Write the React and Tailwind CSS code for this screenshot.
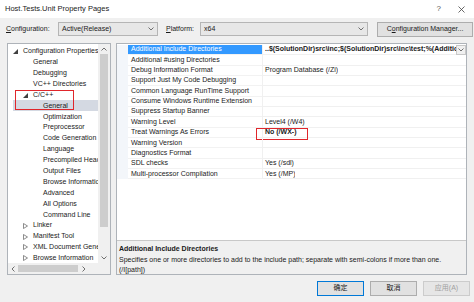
const treeItems = [
  { label: "Configuration Properties", level: 0, arrow: "open" },
  { label: "General", level: 1 },
  { label: "Debugging", level: 1 },
  { label: "VC++ Directories", level: 1 },
  { label: "C/C++", level: 1, arrow: "open" },
  { label: "General", level: 2, selected: true },
  { label: "Optimization", level: 2 },
  { label: "Preprocessor", level: 2 },
  { label: "Code Generation", level: 2 },
  { label: "Language", level: 2 },
  { label: "Precompiled Headers", level: 2 },
  { label: "Output Files", level: 2 },
  { label: "Browse Information", level: 2 },
  { label: "Advanced", level: 2 },
  { label: "All Options", level: 2 },
  { label: "Command Line", level: 2 },
  { label: "Linker", level: 1, arrow: "closed" },
  { label: "Manifest Tool", level: 1, arrow: "closed" },
  { label: "XML Document Generator", level: 1, arrow: "closed" },
  { label: "Browse Information", level: 1, arrow: "closed" },
];

const props = [
  { name: "Additional Include Directories", value: "..$(SolutionDir)src\\inc;$(SolutionDir)src\\inc\\test;%(AdditionalIncludeDirectories)", selected: true },
  { name: "Additional #using Directories", value: "" },
  { name: "Debug Information Format", value: "Program Database (/Zi)" },
  { name: "Support Just My Code Debugging", value: "" },
  { name: "Common Language RunTime Support", value: "" },
  { name: "Consume Windows Runtime Extension", value: "" },
  { name: "Suppress Startup Banner", value: "" },
  { name: "Warning Level", value: "Level4 (/W4)" },
  { name: "Treat Warnings As Errors", value: "No (/WX-)", bold: true, marked: true },
  { name: "Warning Version", value: "" },
  { name: "Diagnostics Format", value: "" },
  { name: "SDL checks", value: "Yes (/sdl)" },
  { name: "Multi-processor Compilation", value: "Yes (/MP)" },
];

const levelPad = ["pl-0", "pl-[10px]", "pl-[20px]"];

function Arrow({ kind }) {
  if (kind === "open") {
    return (
      <svg width="5" height="5" viewBox="0 0 5 5">
        <path d="M5 0 L5 5 L0 5 Z" fill="#404040" />
      </svg>
    );
  }
  return (
    <svg width="5" height="6" viewBox="0 0 5 6">
      <path d="M0.5 0.5 L4.5 3 L0.5 5.5 Z" fill="none" stroke="#707070" strokeWidth="0.8" />
    </svg>
  );
}

function Chevron({ color = "#606060" }) {
  return (
    <svg width="6" height="4" viewBox="0 0 6 4">
      <path d="M0.5 0.5 L3 3 L5.5 0.5" fill="none" stroke={color} strokeWidth="0.9" />
    </svg>
  );
}

export default function App() {
  return (
    <div
      className="w-[474px] h-[302px] bg-[#f0f0f0] flex flex-col overflow-hidden text-[#1a1a1a]"
      style={{ fontFamily: '"Liberation Sans", "Noto Sans CJK SC", sans-serif' }}
    >
      {/* title bar */}
      <div className="h-[18px] bg-white flex items-center justify-between shrink-0">
        <span className="pl-[5px] text-[7.5px] text-[#222]">Host.Tests.Unit Property Pages</span>
        <div className="flex items-center gap-[17px] pr-[9px] text-[#555]">
          <span className="text-[8px]">?</span>
          <svg width="7" height="7" viewBox="0 0 7 7">
            <path d="M0.5 0.5 L6.5 6.5 M6.5 0.5 L0.5 6.5" stroke="#444" strokeWidth="0.8" />
          </svg>
        </div>
      </div>

      {/* configuration row */}
      <div className="h-[22px] flex items-center pl-[6px] shrink-0 text-[7px]">
        <span className="w-[52px]">
          <span className="underline">C</span>onfiguration:
        </span>
        <div className="w-[100px] h-[14px] bg-[#e7e7e7] border border-[#b5b5b5] flex items-center justify-between pl-[3px] pr-[3px]">
          <span>Active(Release)</span>
          <Chevron />
        </div>
        <span className="ml-[8px] w-[34px]">
          <span className="underline">P</span>latform:
        </span>
        <div className="w-[168px] h-[14px] bg-[#e7e7e7] border border-[#b5b5b5] flex items-center justify-between pl-[3px] pr-[3px]">
          <span>x64</span>
          <Chevron />
        </div>
        <div className="ml-[9px] w-[96px] h-[15px] bg-[#e1e1e1] border border-[#adadad] flex items-center justify-center">
          <span>
            C<span className="underline">o</span>nfiguration Manager...
          </span>
        </div>
      </div>

      {/* main area */}
      <div className="flex mt-[3px] h-[232px] shrink-0">
        {/* tree */}
        <div className="ml-[7px] w-[104px] border border-[#aeb3b9] bg-white flex flex-col relative">
          <div className="flex flex-1 min-h-0">
            <div className="flex-1 min-w-0 overflow-hidden pt-[2px] text-[7px]">
              {treeItems.map((item, i) => (
                <div key={i} className="h-[10.9px] flex pl-[5px]">
                  <div
                    className={`flex-1 flex items-center whitespace-nowrap ${levelPad[item.level]} ${
                      item.selected ? "bg-[#d4d9e2]" : ""
                    }`}
                  >
                    <span className="w-[10px] shrink-0 flex items-center">
                      {item.arrow && <Arrow kind={item.arrow} />}
                    </span>
                    <span>{item.label}</span>
                  </div>
                </div>
              ))}
            </div>
            {/* vertical scrollbar */}
            <div className="w-[12px] bg-[#f0f0f0] flex flex-col items-center">
              <div className="h-[10px] flex items-center">
                <svg width="6" height="4" viewBox="0 0 6 4">
                  <path d="M0.5 3.5 L3 1 L5.5 3.5" fill="none" stroke="#606060" strokeWidth="0.9" />
                </svg>
              </div>
              <div className="w-[8px] h-[173px] bg-[#cdcdcd]" />
              <div className="flex-1" />
              <div className="h-[10px] flex items-center">
                <Chevron />
              </div>
            </div>
          </div>
          {/* horizontal scrollbar */}
          <div className="h-[11px] bg-[#f0f0f0] flex items-center shrink-0">
            <div className="w-[10px] flex justify-center">
              <svg width="4" height="6" viewBox="0 0 4 6">
                <path d="M3.5 0.5 L1 3 L3.5 5.5" fill="none" stroke="#606060" strokeWidth="0.9" />
              </svg>
            </div>
            <div className="w-[60px] h-[7px] bg-[#cdcdcd]" />
            <div className="flex-1 flex justify-end pr-[12px]">
              <svg width="4" height="6" viewBox="0 0 4 6">
                <path d="M0.5 0.5 L3 3 L0.5 5.5" fill="none" stroke="#606060" strokeWidth="0.9" />
              </svg>
            </div>
            <div className="w-[12px] h-full bg-[#f0f0f0]" />
          </div>
          {/* annotation box */}
          <div className="absolute left-[7px] top-[46px] w-[59px] h-[20px] border-[1.5px] border-[#e0262b]" />
        </div>

        {/* property grid + description */}
        <div className="ml-[5px] w-[351px] border border-[#aeb3b9] flex flex-col">
          <div className="h-[196px] bg-white relative shrink-0 pt-[1px]">
            {props.map((p, i) => (
              <div key={i} className="h-[10.35px] flex text-[7px]">
                <div className="w-[11px] bg-[#f3f6fa]" />
                <div
                  className={`w-[134px] flex items-center pl-[3px] whitespace-nowrap overflow-hidden border-b border-[#f2f2f2] ${
                    p.selected ? "bg-[#3399ff] text-white" : ""
                  }`}
                >
                  {p.name}
                </div>
                <div className="flex-1 min-w-0 flex items-center border-l border-b border-[#f0f0f0] relative">
                  <span
                    className={`pl-[2px] whitespace-nowrap overflow-hidden ${
                      p.selected || p.bold ? "font-bold" : ""
                    } ${p.selected ? "pr-[12px]" : ""}`}
                  >
                    {p.value}
                  </span>
                  {p.selected && (
                    <div className="absolute right-0 top-0 w-[10px] h-[10px] bg-[#f0f0f0] border border-[#c8c8c8] flex items-center justify-center">
                      <Chevron />
                    </div>
                  )}
                  {p.marked && (
                    <div className="absolute left-[-7px] top-[0px] w-[52px] h-[12px] border-[1.5px] border-[#e0262b]" />
                  )}
                </div>
              </div>
            ))}
          </div>
          <div className="flex-1 border-t border-[#c8c8c8] px-[2px] pt-[3px] text-[7px] leading-[10.5px]">
            <div className="font-bold">Additional Include Directories</div>
            <div className="whitespace-nowrap">
              Specifies one or more directories to add to the include path; separate with semi-colons if more than one.
            </div>
            <div>(/I[path])</div>
          </div>
        </div>
      </div>

      {/* buttons */}
      <div className="flex justify-end gap-[6px] pr-[4px] mt-[6px] text-[7px]">
        <div className="w-[47px] h-[15px] bg-[#e1e1e1] border border-[#0078d7] flex items-center justify-center">
          确定
        </div>
        <div className="w-[47px] h-[15px] bg-[#e1e1e1] border border-[#adadad] flex items-center justify-center">
          取消
        </div>
        <div className="w-[47px] h-[15px] bg-[#e6e6e6] border border-[#cccccc] flex items-center justify-center text-[#a0a0a0]">
          应用(A)
        </div>
      </div>
    </div>
  );
}
